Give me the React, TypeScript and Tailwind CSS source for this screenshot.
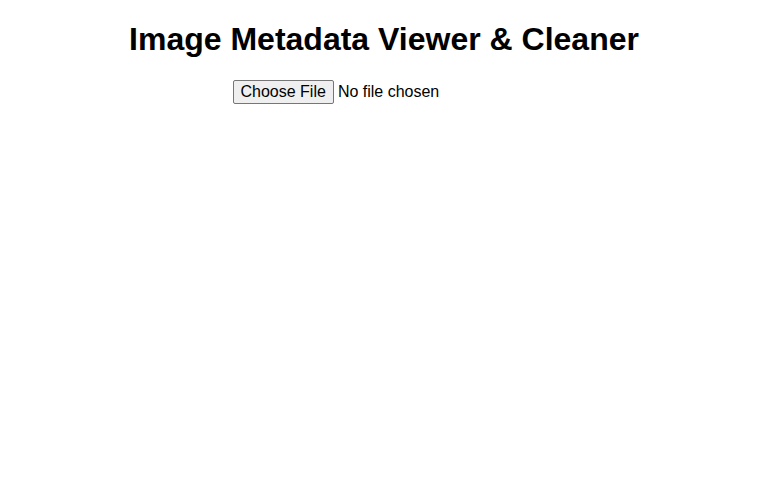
export default function App() {
  return (
    <div className="text-center font-['Liberation_Sans',Arial,sans-serif] text-black">
      <h1 className="my-[21.44px] text-[32px] leading-[normal] font-bold">
        Image Metadata Viewer &amp; Cleaner
      </h1>
      <input
        type="file"
        accept="image/*"
        className="text-base leading-[normal] file:mr-1 file:rounded-[2px] file:border file:border-solid file:border-[#767676] file:bg-[#efefef] file:px-[7px] file:py-[2px] file:text-base file:leading-[normal] file:text-black"
      />
    </div>
  );
}
